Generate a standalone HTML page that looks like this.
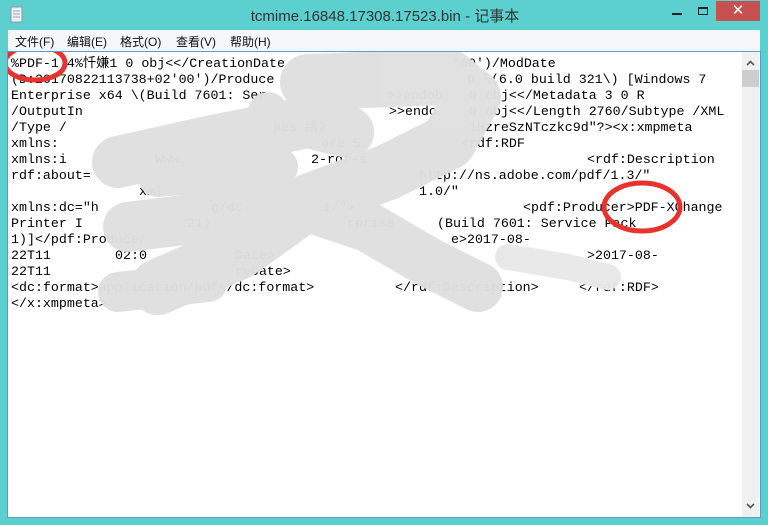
<!DOCTYPE html>
<html><head><meta charset="utf-8"><style>
*{margin:0;padding:0;box-sizing:border-box}
body{width:768px;height:525px;background:#5ccfcf;position:relative;overflow:hidden;font-family:"Liberation Sans","Noto Sans CJK SC",sans-serif}
#title{position:absolute;left:0;top:5px;width:768px;text-align:center;font-size:15px;color:#333;padding-left:2px}
#menu{position:absolute;left:8px;top:30px;width:752px;height:21px;background:#f5f6f7;font-size:12px;color:#111}
#menu span{position:absolute;top:3px}
#edit{position:absolute;left:7px;top:51px;width:754px;height:467px;border:1px solid #5b9bd5;background:#fff;overflow:hidden}
.l{position:absolute;font-family:"Liberation Mono","Noto Sans CJK SC",monospace;font-size:13.3px;line-height:16px;white-space:pre;color:#000}
#sb{position:absolute;left:734px;top:0;width:17px;height:465px;background:#f0f0f0}
</style></head><body>
<svg style="position:absolute;left:10px;top:6px" width="14" height="18"><rect x="1" y="1" width="11" height="15" fill="#eef2f6" stroke="#8a9aab"/><path d="M3 5h7M3 8h7M3 11h7" stroke="#9ab" /></svg>
<div id="title">tcmime.16848.17308.17523.bin - 记事本</div>
<div style="position:absolute;left:672px;top:13px;width:10px;height:2px;background:#222"></div>
<div style="position:absolute;left:698px;top:7px;width:10px;height:8px;border:1px solid #222;border-top-width:2px"></div>
<div style="position:absolute;left:716px;top:1px;width:44px;height:20px;background:#c75050;color:#fff;font-size:15px;text-align:center;line-height:20px">✕</div>
<div id="menu"><span style="left:7px">文件(F)</span><span style="left:59px">编辑(E)</span><span style="left:112px">格式(O)</span><span style="left:168px">查看(V)</span><span style="left:222px">帮助(H)</span></div>
<div id="edit">
<div style="position:absolute;left:3px;top:4px">
<div class="l" style="left:0;top:0">%PDF-1.4%忏嫌1 0 obj&lt;&lt;/CreationDate</div><div class="l" style="left:441px;top:0">'00')/ModDate</div>
<div class="l" style="left:0;top:16px">(D:20170822113738+02'00')/Produce</div><div class="l" style="left:456px;top:16px">6 \(6.0 build 321\) [Windows 7</div>
<div class="l" style="left:0;top:32px">Enterprise x64 \(Build 7601: Ser</div><div class="l" style="left:376px;top:32px">&gt;&gt;endob</div><div class="l" style="left:458px;top:32px">0 obj&lt;&lt;/Metadata 3 0 R</div>
<div class="l" style="left:0;top:48px">/OutputIn</div><div class="l" style="left:378px;top:48px">&gt;&gt;endo</div><div class="l" style="left:458px;top:48px">0 obj&lt;&lt;/Length 2760/Subtype /XML</div>
<div class="l" style="left:0;top:64px">/Type /</div><div class="l" style="left:262px;top:64px">pes 绪?</div><div class="l" style="left:458px;top:64px">iHzreSzNTczkc9d"?&gt;&lt;x:xmpmeta</div>
<div class="l" style="left:0;top:80px">xmlns:</div><div class="l" style="left:310px;top:80px">ore 5.</div><div class="l" style="left:450px;top:80px">&lt;rdf:RDF</div>
<div class="l" style="left:0;top:96px">xmlns:i</div><div class="l" style="left:144px;top:96px">www.</div><div class="l" style="left:300px;top:96px">2-rdf-s</div><div class="l" style="left:576px;top:96px">&lt;rdf:Description</div>
<div class="l" style="left:0;top:112px">rdf:about=</div><div class="l" style="left:408px;top:112px">http://ns.adobe.com/pdf/1.3/"</div>
<div class="l" style="left:128px;top:128px">xml</div><div class="l" style="left:408px;top:128px">1.0/"</div>
<div class="l" style="left:0;top:144px">xmlns:dc="h</div><div class="l" style="left:200px;top:144px">g/dc</div><div class="l" style="left:312px;top:144px">1/"&gt;</div><div class="l" style="left:512px;top:144px">&lt;pdf:Producer&gt;PDF-XChange</div>
<div class="l" style="left:0;top:160px">Printer I</div><div class="l" style="left:176px;top:160px">21)</div><div class="l" style="left:336px;top:160px">rprise</div><div class="l" style="left:426px;top:160px">(Build 7601: Service Pack</div>
<div class="l" style="left:0;top:176px">1)]&lt;/pdf:Producer</div><div class="l" style="left:440px;top:176px">e&gt;2017-08-</div>
<div class="l" style="left:0;top:192px">22T11</div><div class="l" style="left:104px;top:192px">02:0</div><div class="l" style="left:224px;top:192px">Date&gt;</div><div class="l" style="left:576px;top:192px">&gt;2017-08-</div>
<div class="l" style="left:0;top:208px">22T11</div><div class="l" style="left:224px;top:208px">ryDate&gt;</div>
<div class="l" style="left:0;top:224px">&lt;dc:format&gt;application/pdf&lt;/dc:format&gt;</div><div class="l" style="left:384px;top:224px">&lt;/rdf:Description&gt;</div><div class="l" style="left:568px;top:224px">&lt;/rdf:RDF&gt;</div>
<div class="l" style="left:0;top:240px">&lt;/x:xmpmeta&gt;</div>
</div>
<svg style="position:absolute;left:0;top:0" width="734" height="465">
<g fill="none" stroke="#e0e0e0" stroke-linecap="round" stroke-linejoin="round" opacity="0.97">
<path d="M300 30 L440 25 L465 45 L440 90 L380 120 L300 150 L230 200 L150 235" stroke-width="56"/>
<path d="M110 110 L200 90 L300 70 L340 80" stroke-width="52"/>
<path d="M120 175 L200 165 L300 155 L360 175 L420 210 L470 235" stroke-width="50"/>
<path d="M150 125 L270 115" stroke-width="40"/>
<path d="M250 95 L260 60" stroke-width="40"/>
<path d="M500 205 L560 215 L600 225" stroke-width="26" stroke="#e8e8e8"/>
<path d="M110 240 L200 230" stroke-width="40"/>
</g>
<ellipse cx="27" cy="11" rx="30" ry="17" fill="none" stroke="#e8322d" stroke-width="5"/>
<ellipse cx="634" cy="155" rx="38" ry="24" fill="none" stroke="#e8322d" stroke-width="5"/>
</svg>
<div id="sb">
<div style="position:absolute;left:0;top:18px;width:17px;height:17px;background:#cdcdcd"></div>
<svg style="position:absolute;left:4px;top:8px" width="9" height="6"><path d="M1 5L4.5 1.5L8 5" stroke="#555" stroke-width="1.6" fill="none"/></svg>
<svg style="position:absolute;left:4px;top:451px" width="9" height="6"><path d="M1 1L4.5 4.5L8 1" stroke="#555" stroke-width="1.6" fill="none"/></svg>
</div>
</div>
</body></html>
